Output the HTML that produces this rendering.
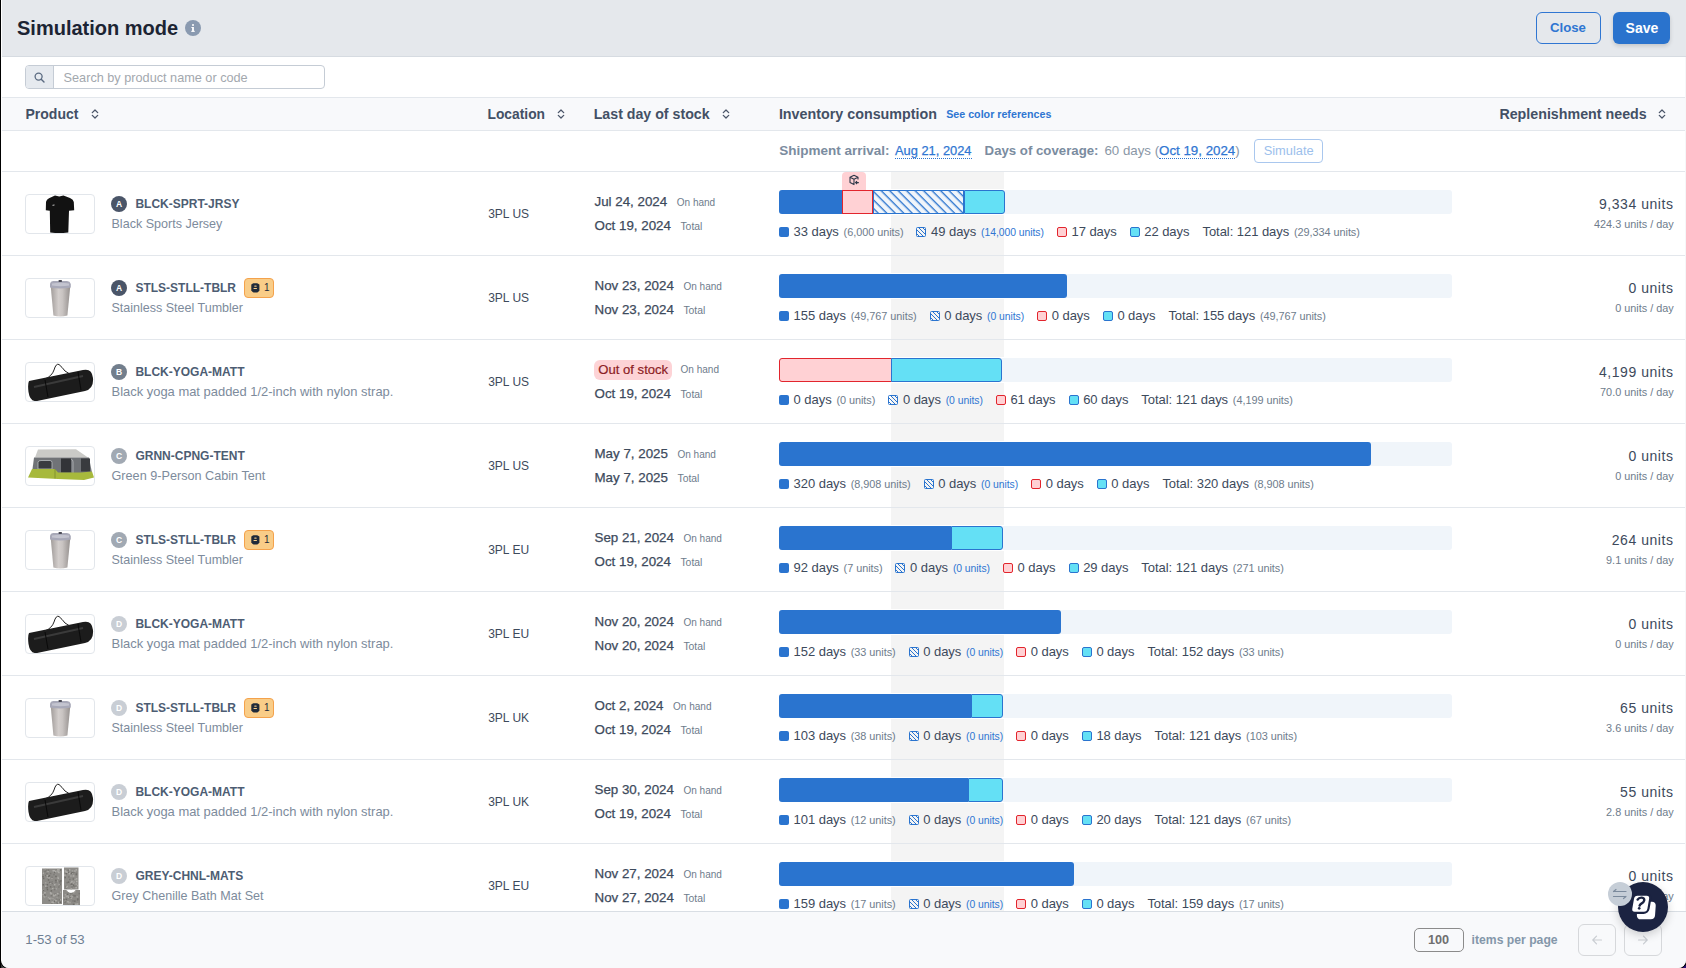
<!DOCTYPE html><html><head><meta charset="utf-8"><title>Simulation mode</title><style>
*{margin:0;padding:0;box-sizing:border-box}
html,body{width:1686px;height:968px;overflow:hidden;background:linear-gradient(to right,#111 0,#999 6px,#b8b8b8 20px,#b8b8b8 50%,#26106a 50%,#2a0f78 100%)}
body{font-family:"Liberation Sans",sans-serif;position:relative}
.t{position:absolute;white-space:nowrap}
.abs{position:absolute}
</style></head><body>
<div class="abs" style="left:0px;top:0px;width:1px;height:968px;background:#000"></div>
<div class="abs" style="left:1px;top:0px;width:1685px;height:968px;background:#fff;border-radius:0 0 8px 8px;border-left:1px solid #fff;box-shadow:0 0 0 1px #000"></div>
<div class="abs" style="left:2px;top:0px;width:1684px;height:56px;background:#e5e8ec"></div>
<div class="abs" style="left:2px;top:56px;width:1684px;height:1px;background:#d6dbe1"></div>
<div class="t" style="left:17px;top:17.97px;font-size:20px;line-height:20px;font-weight:700;color:#1c2433;">Simulation mode</div>
<svg class="abs" style="left:185px;top:20px" width="16" height="16" viewBox="0 0 16 16"><circle cx="8" cy="8" r="8" fill="#8a9ab0"/><rect x="7.1" y="7" width="1.8" height="4.6" fill="#fff"/><rect x="6.2" y="10.8" width="3.6" height="1" fill="#fff"/><rect x="6.4" y="7" width="1.5" height="1" fill="#fff"/><circle cx="8" cy="5" r="1" fill="#fff"/></svg>
<div class="abs" style="left:1536px;top:12px;width:65px;height:32px;border:1px solid #2f76d2;border-radius:6px;background:transparent"></div>
<div class="t" style="left:1550px;top:21.43px;font-size:13.2px;line-height:13.2px;font-weight:700;color:#2f76d2;">Close</div>
<div class="abs" style="left:1613px;top:12px;width:57px;height:32px;background:#2a73cd;border-radius:6px;box-shadow:0 2px 4px rgba(0,0,0,.15)"></div>
<div class="t" style="left:1625.6px;top:20.75px;font-size:14px;line-height:14px;font-weight:700;color:#fff;">Save</div>
<div class="abs" style="left:25px;top:65px;width:300px;height:24px;border:1px solid #c5ccd5;border-radius:4px;background:#fff"></div>
<div class="abs" style="left:26px;top:66px;width:28px;height:22px;background:#e6eaef;border-right:1px solid #c5ccd5;border-radius:3px 0 0 3px"></div>
<svg class="abs" style="left:34px;top:72px" width="11" height="11" viewBox="0 0 11 11"><circle cx="4.6" cy="4.6" r="3.5" fill="none" stroke="#5a6a80" stroke-width="1.3"/><path d="M7.2 7.2L10 10" stroke="#5a6a80" stroke-width="1.4" stroke-linecap="round"/></svg>
<div class="t" style="left:63.6px;top:71.55px;font-size:12.7px;line-height:12.7px;font-weight:400;color:#a3a8ae;">Search by product name or code</div>
<div class="abs" style="left:2px;top:97px;width:1684px;height:1px;background:#e3e7ec"></div>
<div class="abs" style="left:2px;top:98px;width:1684px;height:33px;background:#f8f9fb"></div>
<div class="abs" style="left:2px;top:130px;width:1684px;height:1px;background:#e3e7ec"></div>
<div class="t" style="left:25.5px;top:107.15px;font-size:14px;line-height:14px;font-weight:700;color:#435065;">Product</div>
<svg class="abs" style="left:91px;top:109px" width="8" height="10" viewBox="0 0 8 10"><path d="M1.3 3.6L4 1L6.7 3.6M1.3 6.4L4 9L6.7 6.4" fill="none" stroke="#4a5568" stroke-width="1.3" stroke-linecap="round" stroke-linejoin="round"/></svg>
<div class="t" style="left:487.5px;top:108.32px;font-size:13.8px;line-height:13.8px;font-weight:700;color:#435065;">Location</div>
<svg class="abs" style="left:557px;top:109px" width="8" height="10" viewBox="0 0 8 10"><path d="M1.3 3.6L4 1L6.7 3.6M1.3 6.4L4 9L6.7 6.4" fill="none" stroke="#4a5568" stroke-width="1.3" stroke-linecap="round" stroke-linejoin="round"/></svg>
<div class="t" style="left:593.7px;top:106.98px;font-size:14.2px;line-height:14.2px;font-weight:700;color:#435065;">Last day of stock</div>
<svg class="abs" style="left:722px;top:109px" width="8" height="10" viewBox="0 0 8 10"><path d="M1.3 3.6L4 1L6.7 3.6M1.3 6.4L4 9L6.7 6.4" fill="none" stroke="#4a5568" stroke-width="1.3" stroke-linecap="round" stroke-linejoin="round"/></svg>
<div class="t" style="left:778.9px;top:106.90px;font-size:14.3px;line-height:14.3px;font-weight:700;color:#435065;">Inventory consumption</div>
<div class="t" style="left:946.2px;top:108.94px;font-size:10.7px;line-height:10.7px;font-weight:700;color:#2f76d2;">See color references</div>
<div class="t" style="right:39.299999999999955px;top:106.93px;font-size:14.26px;line-height:14.26px;font-weight:700;color:#435065;">Replenishment needs</div>
<svg class="abs" style="left:1658px;top:109px" width="8" height="10" viewBox="0 0 8 10"><path d="M1.3 3.6L4 1L6.7 3.6M1.3 6.4L4 9L6.7 6.4" fill="none" stroke="#4a5568" stroke-width="1.3" stroke-linecap="round" stroke-linejoin="round"/></svg>
<div class="abs" style="left:2px;top:171px;width:1684px;height:1px;background:#e3e7ec"></div>
<div class="t" style="left:779.2px;top:143.57px;font-size:13.5px;line-height:13.5px;font-weight:700;color:#7b8ca0;">Shipment arrival:</div>
<div class="t" style="left:895px;top:144.11px;font-size:12.86px;line-height:12.86px;font-weight:400;color:#2f76d2;-webkit-text-stroke:0.25px #2f76d2;border-bottom:1px dotted #2f76d2;padding-bottom:1px;line-height:13px">Aug 21, 2024</div>
<div class="t" style="left:984.6px;top:143.80px;font-size:13.23px;line-height:13.23px;font-weight:700;color:#7b8ca0;">Days of coverage:</div>
<div class="t" style="left:1104.4px;top:143.74px;font-size:13.3px;line-height:13.3px;font-weight:400;color:#8a97a6;">60 days (<span style="color:#2f76d2;border-bottom:1px dotted #2f76d2;-webkit-text-stroke:0.25px #2f76d2">Oct 19, 2024</span>)</div>
<div class="abs" style="left:1254px;top:139px;width:69px;height:24px;border:1px solid #a9c7ee;border-radius:4px"></div>
<div class="t" style="left:1263.7px;top:144.62px;font-size:12.85px;line-height:12.85px;font-weight:400;color:#9cc0ec;">Simulate</div>
<div class="abs" style="left:2px;top:172px;width:1684px;height:739px;overflow:hidden">
<div class="abs" style="left:889px;top:0px;width:113px;height:739px;background:#f4f4f4"></div>
<div class="abs" style="left:23px;top:22px;width:70px;height:40px;border:1px solid #e2e6eb;border-radius:4px;background:#fff;overflow:hidden"><svg width="70" height="40" viewBox="0 0 70 40" style="position:absolute;left:-1px;top:-1px"><path d="M30 1.6 Q34.2 3.2 38.4 1.6 L45 4 Q48.5 5.5 48.8 8 L49.2 16.2 L44 16.8 L43.3 38.6 Q34 39.6 25.2 38.6 L24.8 16.8 L20.8 16.2 L21 8 Q21.5 5.3 24 4.2 Z" fill="#121212"/><path d="M27.5 11.3 L29.5 11" stroke="#d8d8d8" stroke-width="0.9"/></svg></div>
<div class="abs" style="left:109px;top:24px;width:16px;height:16px;border-radius:50%;background:#4a5568;color:#fff;font-size:8.5px;font-weight:700;line-height:16.5px;text-align:center">A</div>
<div class="t" style="left:133.4px;top:25.84px;font-size:12px;line-height:12px;font-weight:700;color:#4d5d73;">BLCK-SPRT-JRSY</div>
<div class="t" style="left:109.5px;top:46.37px;font-size:12.56px;line-height:12.56px;font-weight:400;color:#7d8b9c;">Black Sports Jersey</div>
<div class="t" style="left:486.2px;top:35.84px;font-size:12px;line-height:12px;font-weight:400;color:#3d4a5c;">3PL US</div>
<div class="t" style="left:592.5px;top:22.70px;font-size:13.35px;line-height:13.35px;font-weight:400;color:#3d4a5c;-webkit-text-stroke:0.25px #3d4a5c">Jul 24, 2024<span style="font-size:10.04px;color:#6e7c8c;margin-left:9.5px;-webkit-text-stroke:0">On hand</span></div>
<div class="t" style="left:592.5px;top:46.70px;font-size:13.35px;line-height:13.35px;font-weight:400;color:#3d4a5c;-webkit-text-stroke:0.25px #3d4a5c">Oct 19, 2024<span style="font-size:10.4px;color:#6e7c8c;margin-left:9.5px;-webkit-text-stroke:0">Total</span></div>
<div class="abs" style="left:777px;top:18px;width:673px;height:24px;background:#f0f5fa;border-radius:3px;box-shadow:0 0 0 1px #fff"></div>
<div class="abs" style="left:777px;top:18px;width:63px;height:24px;background:#2a74cf;border-radius:3px 0px 0px 3px;"></div>
<div class="abs" style="left:840px;top:18px;width:31px;height:24px;background:#ffd1d4;border:1px solid #e2252d;border-radius:0px 0px 0px 0px;"></div>
<div class="abs" style="left:871px;top:18px;width:91px;height:24px;border:1px solid #2a74cf;overflow:hidden;border-radius:0px 0px 0px 0px;"><svg width="100%" height="100%" preserveAspectRatio="none" style="position:absolute;left:0;top:0"><defs><pattern id="hp" width="6" height="6" patternUnits="userSpaceOnUse" patternTransform="rotate(45)"><rect width="6" height="6" fill="#f0f5fa"/><rect x="0" y="0" width="6" height="1.35" fill="#2a74cf"/></pattern></defs><rect width="100%" height="100%" fill="url(#hp)"/></svg></div>
<div class="abs" style="left:962px;top:18px;width:41px;height:24px;background:#64e0f5;border:1px solid #2a74cf;border-radius:0px 3px 3px 0px;"></div>
<div class="abs" style="left:840px;top:0px;width:24px;height:18px;background:#ffd1d4;border-radius:4px 4px 0 0"></div>
<svg class="abs" style="left:846px;top:2px" width="12" height="12" viewBox="0 0 12 12"><path d="M6 1.3 L10 3.3 L10 5.5 M6 1.3 L2 3.3 L2 8.6 L6 10.6 L6 5.3 L2 3.3 M6 5.3 L10 3.3" fill="none" stroke="#2d3748" stroke-width="1.1" stroke-linejoin="round"/><path d="M7.6 8.6 L10.8 8.6 M9 7.2 L7.6 8.6 L9 10" fill="none" stroke="#2d3748" stroke-width="1.1"/></svg>
<div class="t" style="left:777px;top:53.00px;font-size:13px;line-height:13px;font-weight:400;color:#3d4a5c;letter-spacing:-0.05px;"><span style="margin-right:13px"><span style="display:inline-block;width:10px;height:10px;background:#2a74cf;border-radius:2px;vertical-align:-1px;margin-right:4.6px"></span>33 days<span style="font-size:10.9px;color:#6e7c8c;margin-left:4.8px">(6,000 units)</span></span><span style="margin-right:13px"><span style="display:inline-block;width:10px;height:10px;border:1px solid #2a74cf;border-radius:1.5px;position:relative;overflow:hidden;vertical-align:-1px;margin-right:4.6px"><svg width="8" height="8" viewBox="0 0 8 8" style="position:absolute;left:0;top:0"><path d="M-1 1 L7 9 M1 -1 L9 7 M-3 3 L5 11 M3 -3 L11 5" stroke="#2a74cf" stroke-width="1"/></svg></span>49 days<span style="font-size:10.4px;color:#2f76d2;margin-left:4.8px">(14,000 units)</span></span><span style="margin-right:13px"><span style="display:inline-block;width:10px;height:10px;background:#ffd1d4;border:1px solid #e2252d;border-radius:2px;vertical-align:-1px;margin-right:4.6px"></span>17 days</span><span style="margin-right:13px"><span style="display:inline-block;width:10px;height:10px;background:#64e0f5;border:1px solid #2a74cf;border-radius:2px;vertical-align:-1px;margin-right:4.6px"></span>22 days</span><span>Total: 121 days<span style="font-size:10.9px;color:#6e7c8c;margin-left:4.8px">(29,334 units)</span></span></div>
<div class="t" style="right:12.5px;top:25.15px;font-size:14px;line-height:14px;font-weight:400;color:#3d4a5c;letter-spacing:0.55px;">9,334 units</div>
<div class="t" style="right:12.299999999999955px;top:46.81px;font-size:10.86px;line-height:10.86px;font-weight:400;color:#6e7c8c;">424.3 units / day</div>
<div class="abs" style="left:0px;top:83px;width:1684px;height:1px;background:#e3e7ec"></div>
<div class="abs" style="left:23px;top:106px;width:70px;height:40px;border:1px solid #e2e6eb;border-radius:4px;background:#fff;overflow:hidden"><svg width="70" height="40" viewBox="0 0 70 40" style="position:absolute;left:-1px;top:-1px"><defs><linearGradient id="tg" x1="0" x2="1"><stop offset="0" stop-color="#a29d9b"/><stop offset="0.4" stop-color="#d3cecc"/><stop offset="0.6" stop-color="#c9c4c2"/><stop offset="1" stop-color="#96918f"/></linearGradient></defs><path d="M25.8 9 L45.2 9 L42.4 37.5 Q35 39.6 28.4 37.5 Z" fill="url(#tg)"/><path d="M25 6 Q25.5 3.2 28.5 3 L42 3 Q45 3.2 45.8 6 L45.8 9.5 Q35.5 11.5 25 9.5 Z" fill="#a8a9b8"/><path d="M27 5.5 Q35.5 4 44 5.5 L44 7.5 Q35.5 9 27 7.5 Z" fill="#c3c4cf"/><rect x="33.5" y="2" width="3.5" height="2" rx="0.8" fill="#4a4a55"/></svg></div>
<div class="abs" style="left:109px;top:108px;width:16px;height:16px;border-radius:50%;background:#4a5568;color:#fff;font-size:8.5px;font-weight:700;line-height:16.5px;text-align:center">A</div>
<div class="t" style="left:133.4px;top:109.84px;font-size:12px;line-height:12px;font-weight:700;color:#4d5d73;">STLS-STLL-TBLR</div>
<div class="abs" style="left:242px;top:106px;width:30px;height:20px;border:1px solid #f4a24c;border-radius:4px;background:#f9cd88"></div>
<svg class="abs" style="left:248.5px;top:111px" width="9" height="10" viewBox="0 0 9 10"><path d="M2.4 0.2 H6.1 Q7 0.3 8.4 1.6 V7.4 Q7.4 8.8 6.3 9.5 H2.5 Q1.4 8.8 0.3 7.4 V1.6 Q1.6 0.3 2.4 0.2 Z" fill="#1f2a3a"/><ellipse cx="4.45" cy="3.05" rx="1.5" ry="0.65" fill="#f9cd88"/><rect x="2.4" y="5.1" width="3.7" height="0.9" rx="0.45" fill="#f9cd88"/></svg>
<div class="t" style="left:262px;top:110.53px;font-size:10px;line-height:10px;font-weight:400;color:#1f2a3a;">1</div>
<div class="t" style="left:109.5px;top:130.40px;font-size:12.52px;line-height:12.52px;font-weight:400;color:#7d8b9c;">Stainless Steel Tumbler</div>
<div class="t" style="left:486.2px;top:119.84px;font-size:12px;line-height:12px;font-weight:400;color:#3d4a5c;">3PL US</div>
<div class="t" style="left:592.5px;top:106.70px;font-size:13.35px;line-height:13.35px;font-weight:400;color:#3d4a5c;-webkit-text-stroke:0.25px #3d4a5c">Nov 23, 2024<span style="font-size:10.04px;color:#6e7c8c;margin-left:9.5px;-webkit-text-stroke:0">On hand</span></div>
<div class="t" style="left:592.5px;top:130.70px;font-size:13.35px;line-height:13.35px;font-weight:400;color:#3d4a5c;-webkit-text-stroke:0.25px #3d4a5c">Nov 23, 2024<span style="font-size:10.4px;color:#6e7c8c;margin-left:9.5px;-webkit-text-stroke:0">Total</span></div>
<div class="abs" style="left:777px;top:102px;width:673px;height:24px;background:#f0f5fa;border-radius:3px;box-shadow:0 0 0 1px #fff"></div>
<div class="abs" style="left:777px;top:102px;width:288px;height:24px;background:#2a74cf;border-radius:3px 3px 3px 3px;"></div>
<div class="t" style="left:777px;top:137.00px;font-size:13px;line-height:13px;font-weight:400;color:#3d4a5c;letter-spacing:-0.05px;"><span style="margin-right:13px"><span style="display:inline-block;width:10px;height:10px;background:#2a74cf;border-radius:2px;vertical-align:-1px;margin-right:4.6px"></span>155 days<span style="font-size:10.9px;color:#6e7c8c;margin-left:4.8px">(49,767 units)</span></span><span style="margin-right:13px"><span style="display:inline-block;width:10px;height:10px;border:1px solid #2a74cf;border-radius:1.5px;position:relative;overflow:hidden;vertical-align:-1px;margin-right:4.6px"><svg width="8" height="8" viewBox="0 0 8 8" style="position:absolute;left:0;top:0"><path d="M-1 1 L7 9 M1 -1 L9 7 M-3 3 L5 11 M3 -3 L11 5" stroke="#2a74cf" stroke-width="1"/></svg></span>0 days<span style="font-size:10.4px;color:#2f76d2;margin-left:4.8px">(0 units)</span></span><span style="margin-right:13px"><span style="display:inline-block;width:10px;height:10px;background:#ffd1d4;border:1px solid #e2252d;border-radius:2px;vertical-align:-1px;margin-right:4.6px"></span>0 days</span><span style="margin-right:13px"><span style="display:inline-block;width:10px;height:10px;background:#64e0f5;border:1px solid #2a74cf;border-radius:2px;vertical-align:-1px;margin-right:4.6px"></span>0 days</span><span>Total: 155 days<span style="font-size:10.9px;color:#6e7c8c;margin-left:4.8px">(49,767 units)</span></span></div>
<div class="t" style="right:12.5px;top:109.15px;font-size:14px;line-height:14px;font-weight:400;color:#3d4a5c;letter-spacing:0.55px;">0 units</div>
<div class="t" style="right:12.299999999999955px;top:130.81px;font-size:10.86px;line-height:10.86px;font-weight:400;color:#6e7c8c;">0 units / day</div>
<div class="abs" style="left:0px;top:167px;width:1684px;height:1px;background:#e3e7ec"></div>
<div class="abs" style="left:23px;top:190px;width:70px;height:40px;border:1px solid #e2e6eb;border-radius:4px;background:#fff;overflow:hidden"><svg width="70" height="40" viewBox="0 0 70 40" style="position:absolute;left:-1px;top:-1px"><path d="M4 19 L58 8 Q67 6 68 16 Q69 27 60 29 L12 39 Q5 40 3.5 30 Q2.5 22 4 19 Z" fill="#1c1c1c"/><path d="M9 25 L58 14" stroke="#3a3a3a" stroke-width="2"/><path d="M20 17 Q27 14 29 8 Q31 1 34 2.5 Q37 5 40 9 Q44 12 48 13" fill="none" stroke="#222" stroke-width="1"/><path d="M20 18 L23 35 M53 10 L56 28" stroke="#0a0a0a" stroke-width="1"/></svg></div>
<div class="abs" style="left:109px;top:192px;width:16px;height:16px;border-radius:50%;background:#727e8c;color:#fff;font-size:8.5px;font-weight:700;line-height:16.5px;text-align:center">B</div>
<div class="t" style="left:133.4px;top:193.84px;font-size:12px;line-height:12px;font-weight:700;color:#4d5d73;">BLCK-YOGA-MATT</div>
<div class="t" style="left:109.5px;top:214.04px;font-size:12.95px;line-height:12.95px;font-weight:400;color:#7d8b9c;">Black yoga mat padded 1/2-inch with nylon strap.</div>
<div class="t" style="left:486.2px;top:203.84px;font-size:12px;line-height:12px;font-weight:400;color:#3d4a5c;">3PL US</div>
<div class="abs" style="left:592px;top:188px;width:78px;height:20px;border-radius:6px;background:#fdd3d6"></div>
<div class="t" style="left:596.3px;top:191.41px;font-size:13.1px;line-height:13.1px;font-weight:400;color:#8c1d24;-webkit-text-stroke:0.2px #8c1d24">Out of stock</div>
<div class="t" style="left:678.5px;top:193.00px;font-size:10.04px;line-height:10.04px;font-weight:400;color:#6e7c8c;">On hand</div>
<div class="t" style="left:592.5px;top:214.70px;font-size:13.35px;line-height:13.35px;font-weight:400;color:#3d4a5c;-webkit-text-stroke:0.25px #3d4a5c">Oct 19, 2024<span style="font-size:10.4px;color:#6e7c8c;margin-left:9.5px;-webkit-text-stroke:0">Total</span></div>
<div class="abs" style="left:777px;top:186px;width:673px;height:24px;background:#f0f5fa;border-radius:3px;box-shadow:0 0 0 1px #fff"></div>
<div class="abs" style="left:777px;top:186px;width:113px;height:24px;background:#ffd1d4;border:1px solid #e2252d;border-radius:3px 0px 0px 3px;"></div>
<div class="abs" style="left:889px;top:186px;width:111px;height:24px;background:#64e0f5;border:1px solid #2a74cf;border-radius:0px 3px 3px 0px;"></div>
<div class="t" style="left:777px;top:221.00px;font-size:13px;line-height:13px;font-weight:400;color:#3d4a5c;letter-spacing:-0.05px;"><span style="margin-right:13px"><span style="display:inline-block;width:10px;height:10px;background:#2a74cf;border-radius:2px;vertical-align:-1px;margin-right:4.6px"></span>0 days<span style="font-size:10.9px;color:#6e7c8c;margin-left:4.8px">(0 units)</span></span><span style="margin-right:13px"><span style="display:inline-block;width:10px;height:10px;border:1px solid #2a74cf;border-radius:1.5px;position:relative;overflow:hidden;vertical-align:-1px;margin-right:4.6px"><svg width="8" height="8" viewBox="0 0 8 8" style="position:absolute;left:0;top:0"><path d="M-1 1 L7 9 M1 -1 L9 7 M-3 3 L5 11 M3 -3 L11 5" stroke="#2a74cf" stroke-width="1"/></svg></span>0 days<span style="font-size:10.4px;color:#2f76d2;margin-left:4.8px">(0 units)</span></span><span style="margin-right:13px"><span style="display:inline-block;width:10px;height:10px;background:#ffd1d4;border:1px solid #e2252d;border-radius:2px;vertical-align:-1px;margin-right:4.6px"></span>61 days</span><span style="margin-right:13px"><span style="display:inline-block;width:10px;height:10px;background:#64e0f5;border:1px solid #2a74cf;border-radius:2px;vertical-align:-1px;margin-right:4.6px"></span>60 days</span><span>Total: 121 days<span style="font-size:10.9px;color:#6e7c8c;margin-left:4.8px">(4,199 units)</span></span></div>
<div class="t" style="right:12.5px;top:193.15px;font-size:14px;line-height:14px;font-weight:400;color:#3d4a5c;letter-spacing:0.55px;">4,199 units</div>
<div class="t" style="right:12.299999999999955px;top:214.81px;font-size:10.86px;line-height:10.86px;font-weight:400;color:#6e7c8c;">70.0 units / day</div>
<div class="abs" style="left:0px;top:251px;width:1684px;height:1px;background:#e3e7ec"></div>
<div class="abs" style="left:23px;top:274px;width:70px;height:40px;border:1px solid #e2e6eb;border-radius:4px;background:#fff;overflow:hidden"><svg width="70" height="40" viewBox="0 0 70 40" style="position:absolute;left:-1px;top:-1px"><path d="M10 11.5 L13 3.5 L51 3.2 L63 11.5 Z" fill="#cacac7"/><path d="M9 11.5 L64 11.5 L67 27 L7 27 Z" fill="#707377"/><path d="M13 16 Q13.5 14.5 16 14.5 L25 14.5 Q27 14.5 27 16.5 L27 23 L13 23 Z" fill="#3a3c40" stroke="#b9bcbf" stroke-width="0.8"/><rect x="36" y="12.5" width="10" height="14" fill="#323438"/><path d="M46 13 Q48 13.5 48 16 L48 30" fill="none" stroke="#b6b9bc" stroke-width="0.8"/><rect x="56" y="12.5" width="9" height="13" fill="#393b3f"/><path d="M7 23 L30 23 L33 26.5 L56 26.5 L67 25.5 L69 31.5 L59 34 L33 33 L3 31.5 Z" fill="#a7b93c"/><path d="M30 23 L30 32.5" stroke="#6d7a28" stroke-width="0.6"/></svg></div>
<div class="abs" style="left:109px;top:276px;width:16px;height:16px;border-radius:50%;background:#a1a9b3;color:#fff;font-size:8.5px;font-weight:700;line-height:16.5px;text-align:center">C</div>
<div class="t" style="left:133.4px;top:277.84px;font-size:12px;line-height:12px;font-weight:700;color:#4d5d73;">GRNN-CPNG-TENT</div>
<div class="t" style="left:109.5px;top:298.27px;font-size:12.67px;line-height:12.67px;font-weight:400;color:#7d8b9c;">Green 9-Person Cabin Tent</div>
<div class="t" style="left:486.2px;top:287.84px;font-size:12px;line-height:12px;font-weight:400;color:#3d4a5c;">3PL US</div>
<div class="t" style="left:592.5px;top:274.70px;font-size:13.35px;line-height:13.35px;font-weight:400;color:#3d4a5c;-webkit-text-stroke:0.25px #3d4a5c">May 7, 2025<span style="font-size:10.04px;color:#6e7c8c;margin-left:9.5px;-webkit-text-stroke:0">On hand</span></div>
<div class="t" style="left:592.5px;top:298.70px;font-size:13.35px;line-height:13.35px;font-weight:400;color:#3d4a5c;-webkit-text-stroke:0.25px #3d4a5c">May 7, 2025<span style="font-size:10.4px;color:#6e7c8c;margin-left:9.5px;-webkit-text-stroke:0">Total</span></div>
<div class="abs" style="left:777px;top:270px;width:673px;height:24px;background:#f0f5fa;border-radius:3px;box-shadow:0 0 0 1px #fff"></div>
<div class="abs" style="left:777px;top:270px;width:592px;height:24px;background:#2a74cf;border-radius:3px 3px 3px 3px;"></div>
<div class="t" style="left:777px;top:305.00px;font-size:13px;line-height:13px;font-weight:400;color:#3d4a5c;letter-spacing:-0.05px;"><span style="margin-right:13px"><span style="display:inline-block;width:10px;height:10px;background:#2a74cf;border-radius:2px;vertical-align:-1px;margin-right:4.6px"></span>320 days<span style="font-size:10.9px;color:#6e7c8c;margin-left:4.8px">(8,908 units)</span></span><span style="margin-right:13px"><span style="display:inline-block;width:10px;height:10px;border:1px solid #2a74cf;border-radius:1.5px;position:relative;overflow:hidden;vertical-align:-1px;margin-right:4.6px"><svg width="8" height="8" viewBox="0 0 8 8" style="position:absolute;left:0;top:0"><path d="M-1 1 L7 9 M1 -1 L9 7 M-3 3 L5 11 M3 -3 L11 5" stroke="#2a74cf" stroke-width="1"/></svg></span>0 days<span style="font-size:10.4px;color:#2f76d2;margin-left:4.8px">(0 units)</span></span><span style="margin-right:13px"><span style="display:inline-block;width:10px;height:10px;background:#ffd1d4;border:1px solid #e2252d;border-radius:2px;vertical-align:-1px;margin-right:4.6px"></span>0 days</span><span style="margin-right:13px"><span style="display:inline-block;width:10px;height:10px;background:#64e0f5;border:1px solid #2a74cf;border-radius:2px;vertical-align:-1px;margin-right:4.6px"></span>0 days</span><span>Total: 320 days<span style="font-size:10.9px;color:#6e7c8c;margin-left:4.8px">(8,908 units)</span></span></div>
<div class="t" style="right:12.5px;top:277.15px;font-size:14px;line-height:14px;font-weight:400;color:#3d4a5c;letter-spacing:0.55px;">0 units</div>
<div class="t" style="right:12.299999999999955px;top:298.81px;font-size:10.86px;line-height:10.86px;font-weight:400;color:#6e7c8c;">0 units / day</div>
<div class="abs" style="left:0px;top:335px;width:1684px;height:1px;background:#e3e7ec"></div>
<div class="abs" style="left:23px;top:358px;width:70px;height:40px;border:1px solid #e2e6eb;border-radius:4px;background:#fff;overflow:hidden"><svg width="70" height="40" viewBox="0 0 70 40" style="position:absolute;left:-1px;top:-1px"><defs><linearGradient id="tg" x1="0" x2="1"><stop offset="0" stop-color="#a29d9b"/><stop offset="0.4" stop-color="#d3cecc"/><stop offset="0.6" stop-color="#c9c4c2"/><stop offset="1" stop-color="#96918f"/></linearGradient></defs><path d="M25.8 9 L45.2 9 L42.4 37.5 Q35 39.6 28.4 37.5 Z" fill="url(#tg)"/><path d="M25 6 Q25.5 3.2 28.5 3 L42 3 Q45 3.2 45.8 6 L45.8 9.5 Q35.5 11.5 25 9.5 Z" fill="#a8a9b8"/><path d="M27 5.5 Q35.5 4 44 5.5 L44 7.5 Q35.5 9 27 7.5 Z" fill="#c3c4cf"/><rect x="33.5" y="2" width="3.5" height="2" rx="0.8" fill="#4a4a55"/></svg></div>
<div class="abs" style="left:109px;top:360px;width:16px;height:16px;border-radius:50%;background:#a1a9b3;color:#fff;font-size:8.5px;font-weight:700;line-height:16.5px;text-align:center">C</div>
<div class="t" style="left:133.4px;top:361.84px;font-size:12px;line-height:12px;font-weight:700;color:#4d5d73;">STLS-STLL-TBLR</div>
<div class="abs" style="left:242px;top:358px;width:30px;height:20px;border:1px solid #f4a24c;border-radius:4px;background:#f9cd88"></div>
<svg class="abs" style="left:248.5px;top:363px" width="9" height="10" viewBox="0 0 9 10"><path d="M2.4 0.2 H6.1 Q7 0.3 8.4 1.6 V7.4 Q7.4 8.8 6.3 9.5 H2.5 Q1.4 8.8 0.3 7.4 V1.6 Q1.6 0.3 2.4 0.2 Z" fill="#1f2a3a"/><ellipse cx="4.45" cy="3.05" rx="1.5" ry="0.65" fill="#f9cd88"/><rect x="2.4" y="5.1" width="3.7" height="0.9" rx="0.45" fill="#f9cd88"/></svg>
<div class="t" style="left:262px;top:362.54px;font-size:10px;line-height:10px;font-weight:400;color:#1f2a3a;">1</div>
<div class="t" style="left:109.5px;top:382.40px;font-size:12.52px;line-height:12.52px;font-weight:400;color:#7d8b9c;">Stainless Steel Tumbler</div>
<div class="t" style="left:486.2px;top:371.84px;font-size:12px;line-height:12px;font-weight:400;color:#3d4a5c;">3PL EU</div>
<div class="t" style="left:592.5px;top:358.70px;font-size:13.35px;line-height:13.35px;font-weight:400;color:#3d4a5c;-webkit-text-stroke:0.25px #3d4a5c">Sep 21, 2024<span style="font-size:10.04px;color:#6e7c8c;margin-left:9.5px;-webkit-text-stroke:0">On hand</span></div>
<div class="t" style="left:592.5px;top:382.70px;font-size:13.35px;line-height:13.35px;font-weight:400;color:#3d4a5c;-webkit-text-stroke:0.25px #3d4a5c">Oct 19, 2024<span style="font-size:10.4px;color:#6e7c8c;margin-left:9.5px;-webkit-text-stroke:0">Total</span></div>
<div class="abs" style="left:777px;top:354px;width:673px;height:24px;background:#f0f5fa;border-radius:3px;box-shadow:0 0 0 1px #fff"></div>
<div class="abs" style="left:777px;top:354px;width:172px;height:24px;background:#2a74cf;border-radius:3px 0px 0px 3px;"></div>
<div class="abs" style="left:949px;top:354px;width:52px;height:24px;background:#64e0f5;border:1px solid #2a74cf;border-radius:0px 3px 3px 0px;"></div>
<div class="t" style="left:777px;top:389.00px;font-size:13px;line-height:13px;font-weight:400;color:#3d4a5c;letter-spacing:-0.05px;"><span style="margin-right:13px"><span style="display:inline-block;width:10px;height:10px;background:#2a74cf;border-radius:2px;vertical-align:-1px;margin-right:4.6px"></span>92 days<span style="font-size:10.9px;color:#6e7c8c;margin-left:4.8px">(7 units)</span></span><span style="margin-right:13px"><span style="display:inline-block;width:10px;height:10px;border:1px solid #2a74cf;border-radius:1.5px;position:relative;overflow:hidden;vertical-align:-1px;margin-right:4.6px"><svg width="8" height="8" viewBox="0 0 8 8" style="position:absolute;left:0;top:0"><path d="M-1 1 L7 9 M1 -1 L9 7 M-3 3 L5 11 M3 -3 L11 5" stroke="#2a74cf" stroke-width="1"/></svg></span>0 days<span style="font-size:10.4px;color:#2f76d2;margin-left:4.8px">(0 units)</span></span><span style="margin-right:13px"><span style="display:inline-block;width:10px;height:10px;background:#ffd1d4;border:1px solid #e2252d;border-radius:2px;vertical-align:-1px;margin-right:4.6px"></span>0 days</span><span style="margin-right:13px"><span style="display:inline-block;width:10px;height:10px;background:#64e0f5;border:1px solid #2a74cf;border-radius:2px;vertical-align:-1px;margin-right:4.6px"></span>29 days</span><span>Total: 121 days<span style="font-size:10.9px;color:#6e7c8c;margin-left:4.8px">(271 units)</span></span></div>
<div class="t" style="right:12.5px;top:361.15px;font-size:14px;line-height:14px;font-weight:400;color:#3d4a5c;letter-spacing:0.55px;">264 units</div>
<div class="t" style="right:12.299999999999955px;top:382.81px;font-size:10.86px;line-height:10.86px;font-weight:400;color:#6e7c8c;">9.1 units / day</div>
<div class="abs" style="left:0px;top:419px;width:1684px;height:1px;background:#e3e7ec"></div>
<div class="abs" style="left:23px;top:442px;width:70px;height:40px;border:1px solid #e2e6eb;border-radius:4px;background:#fff;overflow:hidden"><svg width="70" height="40" viewBox="0 0 70 40" style="position:absolute;left:-1px;top:-1px"><path d="M4 19 L58 8 Q67 6 68 16 Q69 27 60 29 L12 39 Q5 40 3.5 30 Q2.5 22 4 19 Z" fill="#1c1c1c"/><path d="M9 25 L58 14" stroke="#3a3a3a" stroke-width="2"/><path d="M20 17 Q27 14 29 8 Q31 1 34 2.5 Q37 5 40 9 Q44 12 48 13" fill="none" stroke="#222" stroke-width="1"/><path d="M20 18 L23 35 M53 10 L56 28" stroke="#0a0a0a" stroke-width="1"/></svg></div>
<div class="abs" style="left:109px;top:444px;width:16px;height:16px;border-radius:50%;background:#c9ced5;color:#fff;font-size:8.5px;font-weight:700;line-height:16.5px;text-align:center">D</div>
<div class="t" style="left:133.4px;top:445.84px;font-size:12px;line-height:12px;font-weight:700;color:#4d5d73;">BLCK-YOGA-MATT</div>
<div class="t" style="left:109.5px;top:466.04px;font-size:12.95px;line-height:12.95px;font-weight:400;color:#7d8b9c;">Black yoga mat padded 1/2-inch with nylon strap.</div>
<div class="t" style="left:486.2px;top:455.84px;font-size:12px;line-height:12px;font-weight:400;color:#3d4a5c;">3PL EU</div>
<div class="t" style="left:592.5px;top:442.70px;font-size:13.35px;line-height:13.35px;font-weight:400;color:#3d4a5c;-webkit-text-stroke:0.25px #3d4a5c">Nov 20, 2024<span style="font-size:10.04px;color:#6e7c8c;margin-left:9.5px;-webkit-text-stroke:0">On hand</span></div>
<div class="t" style="left:592.5px;top:466.70px;font-size:13.35px;line-height:13.35px;font-weight:400;color:#3d4a5c;-webkit-text-stroke:0.25px #3d4a5c">Nov 20, 2024<span style="font-size:10.4px;color:#6e7c8c;margin-left:9.5px;-webkit-text-stroke:0">Total</span></div>
<div class="abs" style="left:777px;top:438px;width:673px;height:24px;background:#f0f5fa;border-radius:3px;box-shadow:0 0 0 1px #fff"></div>
<div class="abs" style="left:777px;top:438px;width:282px;height:24px;background:#2a74cf;border-radius:3px 3px 3px 3px;"></div>
<div class="t" style="left:777px;top:473.00px;font-size:13px;line-height:13px;font-weight:400;color:#3d4a5c;letter-spacing:-0.05px;"><span style="margin-right:13px"><span style="display:inline-block;width:10px;height:10px;background:#2a74cf;border-radius:2px;vertical-align:-1px;margin-right:4.6px"></span>152 days<span style="font-size:10.9px;color:#6e7c8c;margin-left:4.8px">(33 units)</span></span><span style="margin-right:13px"><span style="display:inline-block;width:10px;height:10px;border:1px solid #2a74cf;border-radius:1.5px;position:relative;overflow:hidden;vertical-align:-1px;margin-right:4.6px"><svg width="8" height="8" viewBox="0 0 8 8" style="position:absolute;left:0;top:0"><path d="M-1 1 L7 9 M1 -1 L9 7 M-3 3 L5 11 M3 -3 L11 5" stroke="#2a74cf" stroke-width="1"/></svg></span>0 days<span style="font-size:10.4px;color:#2f76d2;margin-left:4.8px">(0 units)</span></span><span style="margin-right:13px"><span style="display:inline-block;width:10px;height:10px;background:#ffd1d4;border:1px solid #e2252d;border-radius:2px;vertical-align:-1px;margin-right:4.6px"></span>0 days</span><span style="margin-right:13px"><span style="display:inline-block;width:10px;height:10px;background:#64e0f5;border:1px solid #2a74cf;border-radius:2px;vertical-align:-1px;margin-right:4.6px"></span>0 days</span><span>Total: 152 days<span style="font-size:10.9px;color:#6e7c8c;margin-left:4.8px">(33 units)</span></span></div>
<div class="t" style="right:12.5px;top:445.15px;font-size:14px;line-height:14px;font-weight:400;color:#3d4a5c;letter-spacing:0.55px;">0 units</div>
<div class="t" style="right:12.299999999999955px;top:466.81px;font-size:10.86px;line-height:10.86px;font-weight:400;color:#6e7c8c;">0 units / day</div>
<div class="abs" style="left:0px;top:503px;width:1684px;height:1px;background:#e3e7ec"></div>
<div class="abs" style="left:23px;top:526px;width:70px;height:40px;border:1px solid #e2e6eb;border-radius:4px;background:#fff;overflow:hidden"><svg width="70" height="40" viewBox="0 0 70 40" style="position:absolute;left:-1px;top:-1px"><defs><linearGradient id="tg" x1="0" x2="1"><stop offset="0" stop-color="#a29d9b"/><stop offset="0.4" stop-color="#d3cecc"/><stop offset="0.6" stop-color="#c9c4c2"/><stop offset="1" stop-color="#96918f"/></linearGradient></defs><path d="M25.8 9 L45.2 9 L42.4 37.5 Q35 39.6 28.4 37.5 Z" fill="url(#tg)"/><path d="M25 6 Q25.5 3.2 28.5 3 L42 3 Q45 3.2 45.8 6 L45.8 9.5 Q35.5 11.5 25 9.5 Z" fill="#a8a9b8"/><path d="M27 5.5 Q35.5 4 44 5.5 L44 7.5 Q35.5 9 27 7.5 Z" fill="#c3c4cf"/><rect x="33.5" y="2" width="3.5" height="2" rx="0.8" fill="#4a4a55"/></svg></div>
<div class="abs" style="left:109px;top:528px;width:16px;height:16px;border-radius:50%;background:#c9ced5;color:#fff;font-size:8.5px;font-weight:700;line-height:16.5px;text-align:center">D</div>
<div class="t" style="left:133.4px;top:529.84px;font-size:12px;line-height:12px;font-weight:700;color:#4d5d73;">STLS-STLL-TBLR</div>
<div class="abs" style="left:242px;top:526px;width:30px;height:20px;border:1px solid #f4a24c;border-radius:4px;background:#f9cd88"></div>
<svg class="abs" style="left:248.5px;top:531px" width="9" height="10" viewBox="0 0 9 10"><path d="M2.4 0.2 H6.1 Q7 0.3 8.4 1.6 V7.4 Q7.4 8.8 6.3 9.5 H2.5 Q1.4 8.8 0.3 7.4 V1.6 Q1.6 0.3 2.4 0.2 Z" fill="#1f2a3a"/><ellipse cx="4.45" cy="3.05" rx="1.5" ry="0.65" fill="#f9cd88"/><rect x="2.4" y="5.1" width="3.7" height="0.9" rx="0.45" fill="#f9cd88"/></svg>
<div class="t" style="left:262px;top:530.53px;font-size:10px;line-height:10px;font-weight:400;color:#1f2a3a;">1</div>
<div class="t" style="left:109.5px;top:550.40px;font-size:12.52px;line-height:12.52px;font-weight:400;color:#7d8b9c;">Stainless Steel Tumbler</div>
<div class="t" style="left:486.2px;top:539.84px;font-size:12px;line-height:12px;font-weight:400;color:#3d4a5c;">3PL UK</div>
<div class="t" style="left:592.5px;top:526.70px;font-size:13.35px;line-height:13.35px;font-weight:400;color:#3d4a5c;-webkit-text-stroke:0.25px #3d4a5c">Oct 2, 2024<span style="font-size:10.04px;color:#6e7c8c;margin-left:9.5px;-webkit-text-stroke:0">On hand</span></div>
<div class="t" style="left:592.5px;top:550.70px;font-size:13.35px;line-height:13.35px;font-weight:400;color:#3d4a5c;-webkit-text-stroke:0.25px #3d4a5c">Oct 19, 2024<span style="font-size:10.4px;color:#6e7c8c;margin-left:9.5px;-webkit-text-stroke:0">Total</span></div>
<div class="abs" style="left:777px;top:522px;width:673px;height:24px;background:#f0f5fa;border-radius:3px;box-shadow:0 0 0 1px #fff"></div>
<div class="abs" style="left:777px;top:522px;width:192px;height:24px;background:#2a74cf;border-radius:3px 0px 0px 3px;"></div>
<div class="abs" style="left:969px;top:522px;width:32px;height:24px;background:#64e0f5;border:1px solid #2a74cf;border-radius:0px 3px 3px 0px;"></div>
<div class="t" style="left:777px;top:557.00px;font-size:13px;line-height:13px;font-weight:400;color:#3d4a5c;letter-spacing:-0.05px;"><span style="margin-right:13px"><span style="display:inline-block;width:10px;height:10px;background:#2a74cf;border-radius:2px;vertical-align:-1px;margin-right:4.6px"></span>103 days<span style="font-size:10.9px;color:#6e7c8c;margin-left:4.8px">(38 units)</span></span><span style="margin-right:13px"><span style="display:inline-block;width:10px;height:10px;border:1px solid #2a74cf;border-radius:1.5px;position:relative;overflow:hidden;vertical-align:-1px;margin-right:4.6px"><svg width="8" height="8" viewBox="0 0 8 8" style="position:absolute;left:0;top:0"><path d="M-1 1 L7 9 M1 -1 L9 7 M-3 3 L5 11 M3 -3 L11 5" stroke="#2a74cf" stroke-width="1"/></svg></span>0 days<span style="font-size:10.4px;color:#2f76d2;margin-left:4.8px">(0 units)</span></span><span style="margin-right:13px"><span style="display:inline-block;width:10px;height:10px;background:#ffd1d4;border:1px solid #e2252d;border-radius:2px;vertical-align:-1px;margin-right:4.6px"></span>0 days</span><span style="margin-right:13px"><span style="display:inline-block;width:10px;height:10px;background:#64e0f5;border:1px solid #2a74cf;border-radius:2px;vertical-align:-1px;margin-right:4.6px"></span>18 days</span><span>Total: 121 days<span style="font-size:10.9px;color:#6e7c8c;margin-left:4.8px">(103 units)</span></span></div>
<div class="t" style="right:12.5px;top:529.15px;font-size:14px;line-height:14px;font-weight:400;color:#3d4a5c;letter-spacing:0.55px;">65 units</div>
<div class="t" style="right:12.299999999999955px;top:550.81px;font-size:10.86px;line-height:10.86px;font-weight:400;color:#6e7c8c;">3.6 units / day</div>
<div class="abs" style="left:0px;top:587px;width:1684px;height:1px;background:#e3e7ec"></div>
<div class="abs" style="left:23px;top:610px;width:70px;height:40px;border:1px solid #e2e6eb;border-radius:4px;background:#fff;overflow:hidden"><svg width="70" height="40" viewBox="0 0 70 40" style="position:absolute;left:-1px;top:-1px"><path d="M4 19 L58 8 Q67 6 68 16 Q69 27 60 29 L12 39 Q5 40 3.5 30 Q2.5 22 4 19 Z" fill="#1c1c1c"/><path d="M9 25 L58 14" stroke="#3a3a3a" stroke-width="2"/><path d="M20 17 Q27 14 29 8 Q31 1 34 2.5 Q37 5 40 9 Q44 12 48 13" fill="none" stroke="#222" stroke-width="1"/><path d="M20 18 L23 35 M53 10 L56 28" stroke="#0a0a0a" stroke-width="1"/></svg></div>
<div class="abs" style="left:109px;top:612px;width:16px;height:16px;border-radius:50%;background:#c9ced5;color:#fff;font-size:8.5px;font-weight:700;line-height:16.5px;text-align:center">D</div>
<div class="t" style="left:133.4px;top:613.84px;font-size:12px;line-height:12px;font-weight:700;color:#4d5d73;">BLCK-YOGA-MATT</div>
<div class="t" style="left:109.5px;top:634.04px;font-size:12.95px;line-height:12.95px;font-weight:400;color:#7d8b9c;">Black yoga mat padded 1/2-inch with nylon strap.</div>
<div class="t" style="left:486.2px;top:623.84px;font-size:12px;line-height:12px;font-weight:400;color:#3d4a5c;">3PL UK</div>
<div class="t" style="left:592.5px;top:610.70px;font-size:13.35px;line-height:13.35px;font-weight:400;color:#3d4a5c;-webkit-text-stroke:0.25px #3d4a5c">Sep 30, 2024<span style="font-size:10.04px;color:#6e7c8c;margin-left:9.5px;-webkit-text-stroke:0">On hand</span></div>
<div class="t" style="left:592.5px;top:634.70px;font-size:13.35px;line-height:13.35px;font-weight:400;color:#3d4a5c;-webkit-text-stroke:0.25px #3d4a5c">Oct 19, 2024<span style="font-size:10.4px;color:#6e7c8c;margin-left:9.5px;-webkit-text-stroke:0">Total</span></div>
<div class="abs" style="left:777px;top:606px;width:673px;height:24px;background:#f0f5fa;border-radius:3px;box-shadow:0 0 0 1px #fff"></div>
<div class="abs" style="left:777px;top:606px;width:189px;height:24px;background:#2a74cf;border-radius:3px 0px 0px 3px;"></div>
<div class="abs" style="left:966px;top:606px;width:35px;height:24px;background:#64e0f5;border:1px solid #2a74cf;border-radius:0px 3px 3px 0px;"></div>
<div class="t" style="left:777px;top:641.00px;font-size:13px;line-height:13px;font-weight:400;color:#3d4a5c;letter-spacing:-0.05px;"><span style="margin-right:13px"><span style="display:inline-block;width:10px;height:10px;background:#2a74cf;border-radius:2px;vertical-align:-1px;margin-right:4.6px"></span>101 days<span style="font-size:10.9px;color:#6e7c8c;margin-left:4.8px">(12 units)</span></span><span style="margin-right:13px"><span style="display:inline-block;width:10px;height:10px;border:1px solid #2a74cf;border-radius:1.5px;position:relative;overflow:hidden;vertical-align:-1px;margin-right:4.6px"><svg width="8" height="8" viewBox="0 0 8 8" style="position:absolute;left:0;top:0"><path d="M-1 1 L7 9 M1 -1 L9 7 M-3 3 L5 11 M3 -3 L11 5" stroke="#2a74cf" stroke-width="1"/></svg></span>0 days<span style="font-size:10.4px;color:#2f76d2;margin-left:4.8px">(0 units)</span></span><span style="margin-right:13px"><span style="display:inline-block;width:10px;height:10px;background:#ffd1d4;border:1px solid #e2252d;border-radius:2px;vertical-align:-1px;margin-right:4.6px"></span>0 days</span><span style="margin-right:13px"><span style="display:inline-block;width:10px;height:10px;background:#64e0f5;border:1px solid #2a74cf;border-radius:2px;vertical-align:-1px;margin-right:4.6px"></span>20 days</span><span>Total: 121 days<span style="font-size:10.9px;color:#6e7c8c;margin-left:4.8px">(67 units)</span></span></div>
<div class="t" style="right:12.5px;top:613.15px;font-size:14px;line-height:14px;font-weight:400;color:#3d4a5c;letter-spacing:0.55px;">55 units</div>
<div class="t" style="right:12.299999999999955px;top:634.81px;font-size:10.86px;line-height:10.86px;font-weight:400;color:#6e7c8c;">2.8 units / day</div>
<div class="abs" style="left:0px;top:671px;width:1684px;height:1px;background:#e3e7ec"></div>
<div class="abs" style="left:23px;top:694px;width:70px;height:40px;border:1px solid #e2e6eb;border-radius:4px;background:#fff;overflow:hidden"><svg width="70" height="40" viewBox="0 0 70 40" style="position:absolute;left:-1px;top:-1px"><rect x="17" y="2.5" width="20" height="35.5" fill="#8e8c88"/><rect x="39" y="1.5" width="14.5" height="22" fill="#8f8d89"/><path d="M38 24 L41.5 24 Q46 30 50.5 24 L55 24 L55 39.5 L38 39.5 Z" fill="#8c8a86"/><rect x="21.4" y="21.0" width="1.5" height="1.5" fill="#6f6d69"/><rect x="33.9" y="18.6" width="1.5" height="1.5" fill="#7a7874"/><rect x="28.2" y="33.4" width="1.5" height="1.5" fill="#b0aeaa"/><rect x="21.8" y="10.5" width="1.5" height="1.5" fill="#b0aeaa"/><rect x="27.0" y="21.2" width="1.5" height="1.5" fill="#b0aeaa"/><rect x="28.8" y="7.6" width="1.5" height="1.5" fill="#a5a39f"/><rect x="33.1" y="20.3" width="1.5" height="1.5" fill="#7a7874"/><rect x="29.4" y="4.7" width="1.5" height="1.5" fill="#7a7874"/><rect x="22.6" y="3.6" width="1.5" height="1.5" fill="#6f6d69"/><rect x="25.7" y="26.9" width="1.5" height="1.5" fill="#b0aeaa"/><rect x="30.2" y="33.8" width="1.5" height="1.5" fill="#b0aeaa"/><rect x="30.5" y="22.1" width="1.5" height="1.5" fill="#a5a39f"/><rect x="33.3" y="5.8" width="1.5" height="1.5" fill="#a5a39f"/><rect x="26.2" y="11.3" width="1.5" height="1.5" fill="#b0aeaa"/><rect x="31.4" y="31.6" width="1.5" height="1.5" fill="#b0aeaa"/><rect x="26.4" y="15.6" width="1.5" height="1.5" fill="#6f6d69"/><rect x="26.9" y="16.4" width="1.5" height="1.5" fill="#a5a39f"/><rect x="33.7" y="25.7" width="1.5" height="1.5" fill="#7a7874"/><rect x="32.8" y="36.2" width="1.5" height="1.5" fill="#a5a39f"/><rect x="29.9" y="13.6" width="1.5" height="1.5" fill="#7a7874"/><rect x="30.2" y="9.7" width="1.5" height="1.5" fill="#6f6d69"/><rect x="22.3" y="4.7" width="1.5" height="1.5" fill="#b0aeaa"/><rect x="18.6" y="29.7" width="1.5" height="1.5" fill="#b0aeaa"/><rect x="33.6" y="3.2" width="1.5" height="1.5" fill="#b0aeaa"/><rect x="31.2" y="32.2" width="1.5" height="1.5" fill="#7a7874"/><rect x="28.2" y="28.4" width="1.5" height="1.5" fill="#b0aeaa"/><rect x="30.3" y="13.8" width="1.5" height="1.5" fill="#6f6d69"/><rect x="26.4" y="36.4" width="1.5" height="1.5" fill="#6f6d69"/><rect x="17.1" y="6.2" width="1.5" height="1.5" fill="#7a7874"/><rect x="34.6" y="35.5" width="1.5" height="1.5" fill="#6f6d69"/><rect x="28.3" y="7.8" width="1.5" height="1.5" fill="#7a7874"/><rect x="35.1" y="14.1" width="1.5" height="1.5" fill="#6f6d69"/><rect x="34.7" y="33.0" width="1.5" height="1.5" fill="#b0aeaa"/><rect x="24.0" y="32.1" width="1.5" height="1.5" fill="#b0aeaa"/><rect x="28.9" y="22.8" width="1.5" height="1.5" fill="#7a7874"/><rect x="28.5" y="34.5" width="1.5" height="1.5" fill="#6f6d69"/><rect x="25.0" y="27.0" width="1.5" height="1.5" fill="#a5a39f"/><rect x="34.3" y="17.4" width="1.5" height="1.5" fill="#6f6d69"/><rect x="26.6" y="21.1" width="1.5" height="1.5" fill="#7a7874"/><rect x="31.6" y="36.1" width="1.5" height="1.5" fill="#6f6d69"/><rect x="17.4" y="23.4" width="1.5" height="1.5" fill="#a5a39f"/><rect x="18.1" y="23.8" width="1.5" height="1.5" fill="#b0aeaa"/><rect x="23.5" y="33.7" width="1.5" height="1.5" fill="#6f6d69"/><rect x="30.7" y="3.3" width="1.5" height="1.5" fill="#7a7874"/><rect x="34.7" y="3.2" width="1.5" height="1.5" fill="#6f6d69"/><rect x="21.6" y="18.0" width="1.5" height="1.5" fill="#6f6d69"/><rect x="20.3" y="8.8" width="1.5" height="1.5" fill="#6f6d69"/><rect x="32.6" y="11.5" width="1.5" height="1.5" fill="#b0aeaa"/><rect x="18.9" y="30.1" width="1.5" height="1.5" fill="#a5a39f"/><rect x="22.7" y="10.1" width="1.5" height="1.5" fill="#6f6d69"/><rect x="21.4" y="8.9" width="1.5" height="1.5" fill="#b0aeaa"/><rect x="29.0" y="5.8" width="1.5" height="1.5" fill="#6f6d69"/><rect x="34.6" y="25.4" width="1.5" height="1.5" fill="#a5a39f"/><rect x="25.1" y="31.6" width="1.5" height="1.5" fill="#a5a39f"/><rect x="18.5" y="27.7" width="1.5" height="1.5" fill="#a5a39f"/><rect x="33.4" y="17.8" width="1.5" height="1.5" fill="#a5a39f"/><rect x="31.6" y="3.7" width="1.5" height="1.5" fill="#a5a39f"/><rect x="22.8" y="30.9" width="1.5" height="1.5" fill="#a5a39f"/><rect x="33.0" y="14.1" width="1.5" height="1.5" fill="#7a7874"/><rect x="31.9" y="14.2" width="1.5" height="1.5" fill="#a5a39f"/><rect x="24.8" y="20.1" width="1.5" height="1.5" fill="#6f6d69"/><rect x="25.6" y="24.1" width="1.5" height="1.5" fill="#6f6d69"/><rect x="24.8" y="16.4" width="1.5" height="1.5" fill="#b0aeaa"/><rect x="19.9" y="2.7" width="1.5" height="1.5" fill="#b0aeaa"/><rect x="27.3" y="36.0" width="1.5" height="1.5" fill="#a5a39f"/><rect x="17.6" y="18.0" width="1.5" height="1.5" fill="#6f6d69"/><rect x="27.1" y="32.7" width="1.5" height="1.5" fill="#7a7874"/><rect x="32.9" y="35.5" width="1.5" height="1.5" fill="#7a7874"/><rect x="32.0" y="4.0" width="1.5" height="1.5" fill="#a5a39f"/><rect x="33.6" y="33.1" width="1.5" height="1.5" fill="#7a7874"/><rect x="17.2" y="27.8" width="1.5" height="1.5" fill="#a5a39f"/><rect x="26.3" y="10.6" width="1.5" height="1.5" fill="#7a7874"/><rect x="26.7" y="16.6" width="1.5" height="1.5" fill="#7a7874"/><rect x="23.3" y="11.1" width="1.5" height="1.5" fill="#b0aeaa"/><rect x="32.0" y="4.6" width="1.5" height="1.5" fill="#a5a39f"/><rect x="20.7" y="20.7" width="1.5" height="1.5" fill="#7a7874"/><rect x="20.2" y="29.4" width="1.5" height="1.5" fill="#a5a39f"/><rect x="32.2" y="2.8" width="1.5" height="1.5" fill="#b0aeaa"/><rect x="17.9" y="11.7" width="1.5" height="1.5" fill="#6f6d69"/><rect x="28.4" y="20.2" width="1.5" height="1.5" fill="#7a7874"/><rect x="25.7" y="28.9" width="1.5" height="1.5" fill="#7a7874"/><rect x="32.9" y="28.9" width="1.5" height="1.5" fill="#7a7874"/><rect x="19.3" y="4.8" width="1.5" height="1.5" fill="#7a7874"/><rect x="32.8" y="5.4" width="1.5" height="1.5" fill="#b0aeaa"/><rect x="22.8" y="13.2" width="1.5" height="1.5" fill="#6f6d69"/><rect x="24.1" y="15.7" width="1.5" height="1.5" fill="#6f6d69"/><rect x="23.7" y="9.0" width="1.5" height="1.5" fill="#6f6d69"/><rect x="24.9" y="6.8" width="1.5" height="1.5" fill="#7a7874"/><rect x="30.2" y="15.4" width="1.5" height="1.5" fill="#7a7874"/><rect x="27.5" y="4.0" width="1.5" height="1.5" fill="#b0aeaa"/><rect x="28.2" y="29.1" width="1.5" height="1.5" fill="#b0aeaa"/><rect x="28.8" y="4.0" width="1.5" height="1.5" fill="#b0aeaa"/><rect x="18.0" y="23.8" width="1.5" height="1.5" fill="#6f6d69"/><rect x="24.8" y="26.1" width="1.5" height="1.5" fill="#b0aeaa"/><rect x="17.3" y="9.9" width="1.5" height="1.5" fill="#6f6d69"/><rect x="29.9" y="4.9" width="1.5" height="1.5" fill="#b0aeaa"/><rect x="21.2" y="6.9" width="1.5" height="1.5" fill="#7a7874"/><rect x="34.3" y="15.2" width="1.5" height="1.5" fill="#6f6d69"/><rect x="19.2" y="26.0" width="1.5" height="1.5" fill="#b0aeaa"/><rect x="29.3" y="27.4" width="1.5" height="1.5" fill="#7a7874"/><rect x="32.0" y="26.9" width="1.5" height="1.5" fill="#b0aeaa"/><rect x="19.7" y="28.8" width="1.5" height="1.5" fill="#7a7874"/><rect x="26.8" y="21.7" width="1.5" height="1.5" fill="#b0aeaa"/><rect x="20.3" y="3.3" width="1.5" height="1.5" fill="#7a7874"/><rect x="17.5" y="6.4" width="1.5" height="1.5" fill="#b0aeaa"/><rect x="32.5" y="34.9" width="1.5" height="1.5" fill="#6f6d69"/><rect x="31.8" y="3.7" width="1.5" height="1.5" fill="#a5a39f"/><rect x="19.0" y="28.0" width="1.5" height="1.5" fill="#7a7874"/><rect x="27.2" y="32.1" width="1.5" height="1.5" fill="#a5a39f"/><rect x="32.3" y="10.7" width="1.5" height="1.5" fill="#a5a39f"/><rect x="29.0" y="17.9" width="1.5" height="1.5" fill="#b0aeaa"/><rect x="21.7" y="22.9" width="1.5" height="1.5" fill="#6f6d69"/><rect x="27.3" y="35.4" width="1.5" height="1.5" fill="#b0aeaa"/><rect x="26.3" y="35.6" width="1.5" height="1.5" fill="#b0aeaa"/><rect x="32.6" y="35.4" width="1.5" height="1.5" fill="#b0aeaa"/><rect x="29.8" y="28.2" width="1.5" height="1.5" fill="#b0aeaa"/><rect x="19.9" y="16.1" width="1.5" height="1.5" fill="#a5a39f"/><rect x="20.0" y="19.4" width="1.5" height="1.5" fill="#b0aeaa"/><rect x="50.9" y="12.1" width="1.5" height="1.5" fill="#b0aeaa"/><rect x="46.6" y="19.1" width="1.5" height="1.5" fill="#a5a39f"/><rect x="42.5" y="5.6" width="1.5" height="1.5" fill="#6f6d69"/><rect x="51.2" y="19.0" width="1.5" height="1.5" fill="#6f6d69"/><rect x="47.7" y="19.0" width="1.5" height="1.5" fill="#6f6d69"/><rect x="50.6" y="7.8" width="1.5" height="1.5" fill="#6f6d69"/><rect x="45.2" y="9.3" width="1.5" height="1.5" fill="#a5a39f"/><rect x="46.4" y="6.4" width="1.5" height="1.5" fill="#b0aeaa"/><rect x="49.1" y="4.4" width="1.5" height="1.5" fill="#b0aeaa"/><rect x="48.1" y="5.7" width="1.5" height="1.5" fill="#7a7874"/><rect x="45.3" y="16.3" width="1.5" height="1.5" fill="#b0aeaa"/><rect x="49.2" y="19.6" width="1.5" height="1.5" fill="#7a7874"/><rect x="45.1" y="6.2" width="1.5" height="1.5" fill="#a5a39f"/><rect x="47.4" y="17.4" width="1.5" height="1.5" fill="#7a7874"/><rect x="51.5" y="19.0" width="1.5" height="1.5" fill="#a5a39f"/><rect x="50.6" y="17.4" width="1.5" height="1.5" fill="#a5a39f"/><rect x="41.4" y="15.9" width="1.5" height="1.5" fill="#7a7874"/><rect x="50.7" y="6.7" width="1.5" height="1.5" fill="#7a7874"/><rect x="43.1" y="10.2" width="1.5" height="1.5" fill="#7a7874"/><rect x="40.5" y="6.9" width="1.5" height="1.5" fill="#6f6d69"/><rect x="39.5" y="10.8" width="1.5" height="1.5" fill="#6f6d69"/><rect x="39.1" y="8.4" width="1.5" height="1.5" fill="#b0aeaa"/><rect x="43.9" y="3.1" width="1.5" height="1.5" fill="#b0aeaa"/><rect x="44.1" y="12.7" width="1.5" height="1.5" fill="#7a7874"/><rect x="50.5" y="3.1" width="1.5" height="1.5" fill="#b0aeaa"/><rect x="40.5" y="19.7" width="1.5" height="1.5" fill="#6f6d69"/><rect x="40.3" y="20.8" width="1.5" height="1.5" fill="#6f6d69"/><rect x="47.8" y="9.1" width="1.5" height="1.5" fill="#b0aeaa"/><rect x="42.8" y="15.4" width="1.5" height="1.5" fill="#6f6d69"/><rect x="40.4" y="20.9" width="1.5" height="1.5" fill="#6f6d69"/><rect x="47.7" y="12.5" width="1.5" height="1.5" fill="#7a7874"/><rect x="47.7" y="11.9" width="1.5" height="1.5" fill="#7a7874"/><rect x="48.3" y="15.4" width="1.5" height="1.5" fill="#a5a39f"/><rect x="47.4" y="16.5" width="1.5" height="1.5" fill="#a5a39f"/><rect x="41.3" y="19.7" width="1.5" height="1.5" fill="#b0aeaa"/><rect x="40.6" y="20.6" width="1.5" height="1.5" fill="#a5a39f"/><rect x="51.0" y="14.7" width="1.5" height="1.5" fill="#b0aeaa"/><rect x="46.2" y="14.8" width="1.5" height="1.5" fill="#b0aeaa"/><rect x="45.3" y="17.5" width="1.5" height="1.5" fill="#7a7874"/><rect x="40.4" y="5.2" width="1.5" height="1.5" fill="#b0aeaa"/><rect x="43.7" y="6.9" width="1.5" height="1.5" fill="#b0aeaa"/><rect x="39.7" y="4.3" width="1.5" height="1.5" fill="#b0aeaa"/><rect x="45.6" y="6.6" width="1.5" height="1.5" fill="#6f6d69"/><rect x="50.4" y="20.9" width="1.5" height="1.5" fill="#b0aeaa"/><rect x="46.0" y="17.3" width="1.5" height="1.5" fill="#6f6d69"/><rect x="45.5" y="21.9" width="1.5" height="1.5" fill="#a5a39f"/><rect x="42.5" y="3.5" width="1.5" height="1.5" fill="#7a7874"/><rect x="46.3" y="20.2" width="1.5" height="1.5" fill="#7a7874"/><rect x="41.4" y="5.4" width="1.5" height="1.5" fill="#b0aeaa"/><rect x="47.7" y="9.5" width="1.5" height="1.5" fill="#a5a39f"/><rect x="46.7" y="4.5" width="1.5" height="1.5" fill="#b0aeaa"/><rect x="49.4" y="12.7" width="1.5" height="1.5" fill="#a5a39f"/><rect x="46.4" y="5.6" width="1.5" height="1.5" fill="#6f6d69"/><rect x="43.7" y="28.1" width="1.5" height="1.5" fill="#b0aeaa"/><rect x="51.8" y="37.3" width="1.5" height="1.5" fill="#b0aeaa"/><rect x="42.9" y="36.7" width="1.5" height="1.5" fill="#6f6d69"/><rect x="47.8" y="37.7" width="1.5" height="1.5" fill="#6f6d69"/><rect x="51.9" y="33.3" width="1.5" height="1.5" fill="#7a7874"/><rect x="47.3" y="34.2" width="1.5" height="1.5" fill="#7a7874"/><rect x="39.7" y="34.6" width="1.5" height="1.5" fill="#a5a39f"/><rect x="45.6" y="31.3" width="1.5" height="1.5" fill="#b0aeaa"/><rect x="41.1" y="35.0" width="1.5" height="1.5" fill="#a5a39f"/><rect x="38.6" y="31.0" width="1.5" height="1.5" fill="#b0aeaa"/><rect x="39.7" y="28.0" width="1.5" height="1.5" fill="#a5a39f"/><rect x="40.1" y="35.1" width="1.5" height="1.5" fill="#7a7874"/><rect x="38.4" y="32.7" width="1.5" height="1.5" fill="#7a7874"/><rect x="45.7" y="24.3" width="1.5" height="1.5" fill="#6f6d69"/><rect x="43.0" y="36.2" width="1.5" height="1.5" fill="#a5a39f"/><rect x="39.2" y="35.7" width="1.5" height="1.5" fill="#7a7874"/><rect x="49.1" y="34.4" width="1.5" height="1.5" fill="#6f6d69"/><rect x="53.5" y="26.9" width="1.5" height="1.5" fill="#7a7874"/><rect x="51.4" y="30.1" width="1.5" height="1.5" fill="#a5a39f"/><rect x="45.5" y="25.5" width="1.5" height="1.5" fill="#7a7874"/><rect x="44.3" y="35.8" width="1.5" height="1.5" fill="#a5a39f"/><rect x="44.1" y="30.6" width="1.5" height="1.5" fill="#7a7874"/><rect x="46.3" y="29.9" width="1.5" height="1.5" fill="#b0aeaa"/><rect x="42.7" y="30.5" width="1.5" height="1.5" fill="#b0aeaa"/><rect x="44.8" y="30.4" width="1.5" height="1.5" fill="#7a7874"/><rect x="49.2" y="29.1" width="1.5" height="1.5" fill="#6f6d69"/><rect x="44.9" y="29.1" width="1.5" height="1.5" fill="#b0aeaa"/><rect x="41.5" y="24.0" width="1.5" height="1.5" fill="#a5a39f"/><rect x="42.0" y="29.2" width="1.5" height="1.5" fill="#b0aeaa"/><rect x="46.3" y="26.2" width="1.5" height="1.5" fill="#7a7874"/><rect x="40.6" y="29.7" width="1.5" height="1.5" fill="#a5a39f"/><rect x="47.9" y="25.9" width="1.5" height="1.5" fill="#a5a39f"/><rect x="44.9" y="26.6" width="1.5" height="1.5" fill="#7a7874"/><rect x="44.2" y="28.4" width="1.5" height="1.5" fill="#7a7874"/><rect x="48.9" y="24.7" width="1.5" height="1.5" fill="#b0aeaa"/><rect x="38.6" y="30.9" width="1.5" height="1.5" fill="#a5a39f"/><rect x="41.7" y="29.4" width="1.5" height="1.5" fill="#a5a39f"/><rect x="40.6" y="32.7" width="1.5" height="1.5" fill="#6f6d69"/><rect x="52.1" y="32.3" width="1.5" height="1.5" fill="#6f6d69"/><rect x="42.3" y="35.0" width="1.5" height="1.5" fill="#b0aeaa"/><rect x="50.2" y="37.5" width="1.5" height="1.5" fill="#b0aeaa"/><rect x="41.9" y="27.7" width="1.5" height="1.5" fill="#6f6d69"/><rect x="47.8" y="28.8" width="1.5" height="1.5" fill="#7a7874"/><path d="M41.5 24 Q46 30 50.5 24 Z" fill="#fff"/></svg></div>
<div class="abs" style="left:109px;top:696px;width:16px;height:16px;border-radius:50%;background:#c9ced5;color:#fff;font-size:8.5px;font-weight:700;line-height:16.5px;text-align:center">D</div>
<div class="t" style="left:133.4px;top:697.84px;font-size:12px;line-height:12px;font-weight:700;color:#4d5d73;">GREY-CHNL-MATS</div>
<div class="t" style="left:109.5px;top:718.38px;font-size:12.55px;line-height:12.55px;font-weight:400;color:#7d8b9c;">Grey Chenille Bath Mat Set</div>
<div class="t" style="left:486.2px;top:707.84px;font-size:12px;line-height:12px;font-weight:400;color:#3d4a5c;">3PL EU</div>
<div class="t" style="left:592.5px;top:694.70px;font-size:13.35px;line-height:13.35px;font-weight:400;color:#3d4a5c;-webkit-text-stroke:0.25px #3d4a5c">Nov 27, 2024<span style="font-size:10.04px;color:#6e7c8c;margin-left:9.5px;-webkit-text-stroke:0">On hand</span></div>
<div class="t" style="left:592.5px;top:718.70px;font-size:13.35px;line-height:13.35px;font-weight:400;color:#3d4a5c;-webkit-text-stroke:0.25px #3d4a5c">Nov 27, 2024<span style="font-size:10.4px;color:#6e7c8c;margin-left:9.5px;-webkit-text-stroke:0">Total</span></div>
<div class="abs" style="left:777px;top:690px;width:673px;height:24px;background:#f0f5fa;border-radius:3px;box-shadow:0 0 0 1px #fff"></div>
<div class="abs" style="left:777px;top:690px;width:295px;height:24px;background:#2a74cf;border-radius:3px 3px 3px 3px;"></div>
<div class="t" style="left:777px;top:725.00px;font-size:13px;line-height:13px;font-weight:400;color:#3d4a5c;letter-spacing:-0.05px;"><span style="margin-right:13px"><span style="display:inline-block;width:10px;height:10px;background:#2a74cf;border-radius:2px;vertical-align:-1px;margin-right:4.6px"></span>159 days<span style="font-size:10.9px;color:#6e7c8c;margin-left:4.8px">(17 units)</span></span><span style="margin-right:13px"><span style="display:inline-block;width:10px;height:10px;border:1px solid #2a74cf;border-radius:1.5px;position:relative;overflow:hidden;vertical-align:-1px;margin-right:4.6px"><svg width="8" height="8" viewBox="0 0 8 8" style="position:absolute;left:0;top:0"><path d="M-1 1 L7 9 M1 -1 L9 7 M-3 3 L5 11 M3 -3 L11 5" stroke="#2a74cf" stroke-width="1"/></svg></span>0 days<span style="font-size:10.4px;color:#2f76d2;margin-left:4.8px">(0 units)</span></span><span style="margin-right:13px"><span style="display:inline-block;width:10px;height:10px;background:#ffd1d4;border:1px solid #e2252d;border-radius:2px;vertical-align:-1px;margin-right:4.6px"></span>0 days</span><span style="margin-right:13px"><span style="display:inline-block;width:10px;height:10px;background:#64e0f5;border:1px solid #2a74cf;border-radius:2px;vertical-align:-1px;margin-right:4.6px"></span>0 days</span><span>Total: 159 days<span style="font-size:10.9px;color:#6e7c8c;margin-left:4.8px">(17 units)</span></span></div>
<div class="t" style="right:12.5px;top:697.15px;font-size:14px;line-height:14px;font-weight:400;color:#3d4a5c;letter-spacing:0.55px;">0 units</div>
<div class="t" style="right:12.299999999999955px;top:718.81px;font-size:10.86px;line-height:10.86px;font-weight:400;color:#6e7c8c;">0 units / day</div>
</div>
<div class="abs" style="left:2px;top:911px;width:1684px;height:1px;background:#d9dee4"></div>
<div class="abs" style="left:2px;top:912px;width:1684px;height:56px;background:#f8f9fb;border-radius:0 0 8px 7px"></div>
<div class="t" style="left:25.3px;top:933.33px;font-size:13.2px;line-height:13.2px;font-weight:400;color:#6f8093;">1-53 of 53</div>
<div class="abs" style="left:1414px;top:928px;width:50px;height:24px;border:1px solid #8b8b8b;border-radius:5px"></div>
<div class="t" style="left:1428px;top:933.75px;font-size:12.7px;line-height:12.7px;font-weight:700;color:#6f6f6f;">100</div>
<div class="t" style="left:1471.6px;top:934.17px;font-size:12.2px;line-height:12.2px;font-weight:700;color:#8497aa;">items per page</div>
<div class="abs" style="left:1578px;top:924px;width:38px;height:32px;border:1px solid #d6d8db;border-radius:6px"></div>
<div class="abs" style="left:1624px;top:924px;width:38px;height:32px;border:1px solid #d6d8db;border-radius:6px"></div>
<svg class="abs" style="left:1591px;top:934px" width="12" height="12" viewBox="0 0 12 12"><path d="M10.5 6H1.8M5.5 2.2L1.8 6L5.5 9.8" fill="none" stroke="#c9cdd2" stroke-width="1.2" stroke-linecap="round"/></svg>
<svg class="abs" style="left:1637px;top:934px" width="12" height="12" viewBox="0 0 12 12"><path d="M1.5 6H10.2M6.5 2.2L10.2 6L6.5 9.8" fill="none" stroke="#c9cdd2" stroke-width="1.2" stroke-linecap="round"/></svg>
<div class="abs" style="left:1685px;top:57px;width:1px;height:854px;background:#f6f7f9"></div>
<div class="abs" style="left:1618px;top:882px;width:50px;height:50px;border-radius:50%;background:#1b2341;box-shadow:0 3px 10px rgba(0,0,0,.18)"></div>
<svg class="abs" style="left:1618px;top:882px" width="50" height="50" viewBox="0 0 50 50"><g transform="translate(19.8 19.7) skewX(-4)"><rect width="18.2" height="17.6" rx="4" fill="#fff"/></g><g transform="translate(16.1 13.3) skewX(-9.7)"><rect x="-0.6" y="-0.6" width="17.3" height="18.1" rx="4" fill="#fff" stroke="#1b2341" stroke-width="2.2"/></g><path d="M19.6 17.6 Q21 15.4 23.8 15.6 Q26.6 16 26.2 18.6 Q25.8 20.4 23.4 21.6 Q22 22.4 21.6 23.6" fill="none" stroke="#1b2341" stroke-width="2.4" stroke-linecap="round"/><circle cx="21.2" cy="26.3" r="1.35" fill="#1b2341"/></svg>
<div class="abs" style="left:1608px;top:882px;width:24px;height:24px;border-radius:50%;background:#c6ced7"></div>
<svg class="abs" style="left:1608px;top:882px" width="24" height="24" viewBox="0 0 24 24"><path d="M5.5 9.5H18M5.5 9.5L8 7.5M5.5 14.5H18M18 14.5L15.5 16.5" fill="none" stroke="#7b8a9c" stroke-width="1.2" stroke-linecap="round"/></svg>
</body></html>
